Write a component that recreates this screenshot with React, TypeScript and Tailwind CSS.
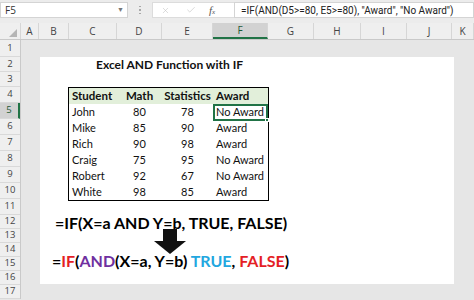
import React from 'react';
import { X, Check } from 'lucide-react';

const columns = [
  { label: '', w: 'w-[21px]' },
  { label: 'A', w: 'w-[18px]' },
  { label: 'B', w: 'w-[30px]' },
  { label: 'C', w: 'w-[48px]' },
  { label: 'D', w: 'w-[45px]' },
  { label: 'E', w: 'w-[51px]' },
  { label: 'F', w: 'w-[55px]' },
  { label: 'G', w: 'w-[46px]' },
  { label: 'H', w: 'w-[47px]' },
  { label: 'I', w: 'w-[46px]' },
  { label: 'J', w: 'w-[45px]' },
  { label: 'K', w: 'w-[22px]' },
];

const rowHeights = [
  'h-[17px]', 'h-[15px]', 'h-[15px]',
  'h-[16px]', 'h-[16px]', 'h-[16px]', 'h-[16px]', 'h-[16px]', 'h-[16px]', 'h-[16px]', 'h-[16px]',
  'h-[14px]', 'h-[14px]', 'h-[14px]', 'h-[14px]', 'h-[14px]', 'h-[14px]',
];

const students = [
  { name: 'John', math: 80, stats: 78, award: 'No Award' },
  { name: 'Mike', math: 85, stats: 90, award: 'Award' },
  { name: 'Rich', math: 90, stats: 98, award: 'Award' },
  { name: 'Craig', math: 75, stats: 95, award: 'No Award' },
  { name: 'Robert', math: 92, stats: 67, award: 'No Award' },
  { name: 'White', math: 98, stats: 85, award: 'Award' },
];

const FormulaBar = () => (
  <div className="flex h-[23px] items-start bg-[#ececec] pt-[2px] font-['Open_Sans',sans-serif]">
    {/* name box */}
    <div className="flex h-[16px] w-[128px] items-center justify-between border border-[#d4d4d4] bg-white pl-[4px] pr-[3px] text-[10px] text-[#333]">
      <span>F5</span>
      <span className="text-[7px] text-[#777]">▼</span>
    </div>
    <div className="flex h-[16px] w-[24px] flex-col items-center justify-center gap-[2px]">
      <div className="h-[1.5px] w-[1.5px] bg-[#a8a8a8]" />
      <div className="h-[1.5px] w-[1.5px] bg-[#a8a8a8]" />
      <div className="h-[1.5px] w-[1.5px] bg-[#a8a8a8]" />
    </div>
    {/* buttons */}
    <div className="flex h-[16px] w-[82px] items-center border-y border-l border-[#dcdcdc] bg-white">
      <X className="ml-[8px] h-[9px] w-[9px] text-[#c2c2c2]" strokeWidth={1.5} />
      <Check className="ml-[16px] h-[10px] w-[10px] text-[#c2c2c2]" strokeWidth={1.5} />
      <span className="ml-[13px] font-['Liberation_Serif',serif] text-[11px] italic leading-none text-[#555]">
        f<span className="text-[7px]">x</span>
      </span>
    </div>
    <div className="flex h-[16px] flex-1 items-center border border-[#d4d4d4] bg-white pl-[6px] font-['Roboto',sans-serif] text-[10px] text-[#222] whitespace-nowrap">
      =IF(AND(D5&gt;=80, E5&gt;=80), "Award", "No Award")
    </div>
  </div>
);

const ColumnHeaders = () => (
  <div className="flex h-[17px] border-b border-[#c9c9c9] bg-[#efefef] font-['Open_Sans',sans-serif] text-[10px] text-[#444]">
    {columns.map((c, i) => (
      <div
        key={i}
        className={`${c.w} flex shrink-0 items-center justify-center border-r border-[#d6d6d6] ${
          c.label === 'F' ? 'border-b-2 border-b-[#217346] bg-[#d2d2d2] text-[#1d5a36]' : ''
        }`}
      >
        {i === 0 ? (
          <div className="ml-[5px] mt-[4px] h-0 w-0 border-b-[8px] border-l-[8px] border-b-[#b5b5b5] border-l-transparent" />
        ) : (
          c.label
        )}
      </div>
    ))}
  </div>
);

const RowHeaders = () => (
  <div className="flex w-[21px] shrink-0 flex-col border-r border-[#c9c9c9] bg-[#efefef] font-['Open_Sans',sans-serif] text-[9.5px] text-[#444]">
    {rowHeights.map((h, i) => (
      <div
        key={i}
        className={`${h} flex shrink-0 items-center justify-center border-b border-[#d9d9d9] ${
          i === 4 ? 'border-r-2 border-r-[#217346] bg-[#d2d2d2] text-[#1d5a36]' : ''
        }`}
      >
        {i + 1}
      </div>
    ))}
  </div>
);

const DataTable = () => (
  <div className="ml-[28px] w-[201px] border border-black font-['Lato',sans-serif] text-[11px] text-[#111] whitespace-nowrap">
    <div className="flex h-[16px] items-center bg-[#e2efda] text-[11.5px] font-bold">
      <div className="w-[48px] pl-[3px]">Student</div>
      <div className="w-[45px] text-center">Math</div>
      <div className="w-[51px] text-center">Statistics</div>
      <div className="w-[55px] pl-[3px]">Award</div>
    </div>
    {students.map((s, i) => (
      <div key={s.name} className="flex h-[16px] items-center">
        <div className="w-[48px] pl-[3px]">{s.name}</div>
        <div className="w-[45px] text-center">{s.math}</div>
        <div className="w-[51px] text-center">{s.stats}</div>
        {i === 0 ? (
          <div className="relative flex h-[17px] w-[55px] items-center border-2 border-[#217346] pl-[1px]">
            {s.award}
            <div className="absolute -bottom-[3px] -right-[3px] h-[4px] w-[4px] border border-white bg-[#217346]" />
          </div>
        ) : (
          <div className="w-[55px] pl-[3px]">{s.award}</div>
        )}
      </div>
    ))}
  </div>
);

export default function App() {
  return (
    <div className="h-[300px] w-[474px] overflow-hidden bg-[#e6e6e6]">
      <FormulaBar />
      <ColumnHeaders />
      <div className="flex">
        <RowHeaders />
        <div className="flex-1">
          <div className="ml-[19px] mt-[17px] flex h-[227px] w-[414px] flex-col bg-white font-['Lato',sans-serif]">
            <div className="h-[15px] pl-[56px] text-[12px] font-bold leading-[15px] text-[#111] whitespace-nowrap">
              Excel AND Function with IF
            </div>
            <div className="h-[15px]" />
            <DataTable />
            <div className="h-[14px]" />
            <div className="h-[16px] pl-[15px] text-[16px] font-bold leading-[16px] text-black whitespace-nowrap">
              =IF(X=a AND Y=b, TRUE, FALSE)
            </div>
            <div className="-mt-[2px] ml-[114px] flex h-[25px] w-[32px] flex-col items-center">
              <div className="h-[12px] w-[14px] bg-[#111]" />
              <div className="h-0 w-0 border-x-[16px] border-t-[13px] border-x-transparent border-t-[#111]" />
            </div>
            <div className="-mt-[1px] h-[16px] pl-[12px] text-[16px] font-bold leading-[16px] text-black whitespace-nowrap">
              =<span className="text-[#e41e26]">IF</span>(<span className="text-[#7030a0]">AND</span>(X=a, Y=b){' '}
              <span className="text-[#22a7df]">TRUE</span>, <span className="text-[#e41e26]">FALSE</span>)
            </div>
          </div>
        </div>
      </div>
    </div>
  );
}
